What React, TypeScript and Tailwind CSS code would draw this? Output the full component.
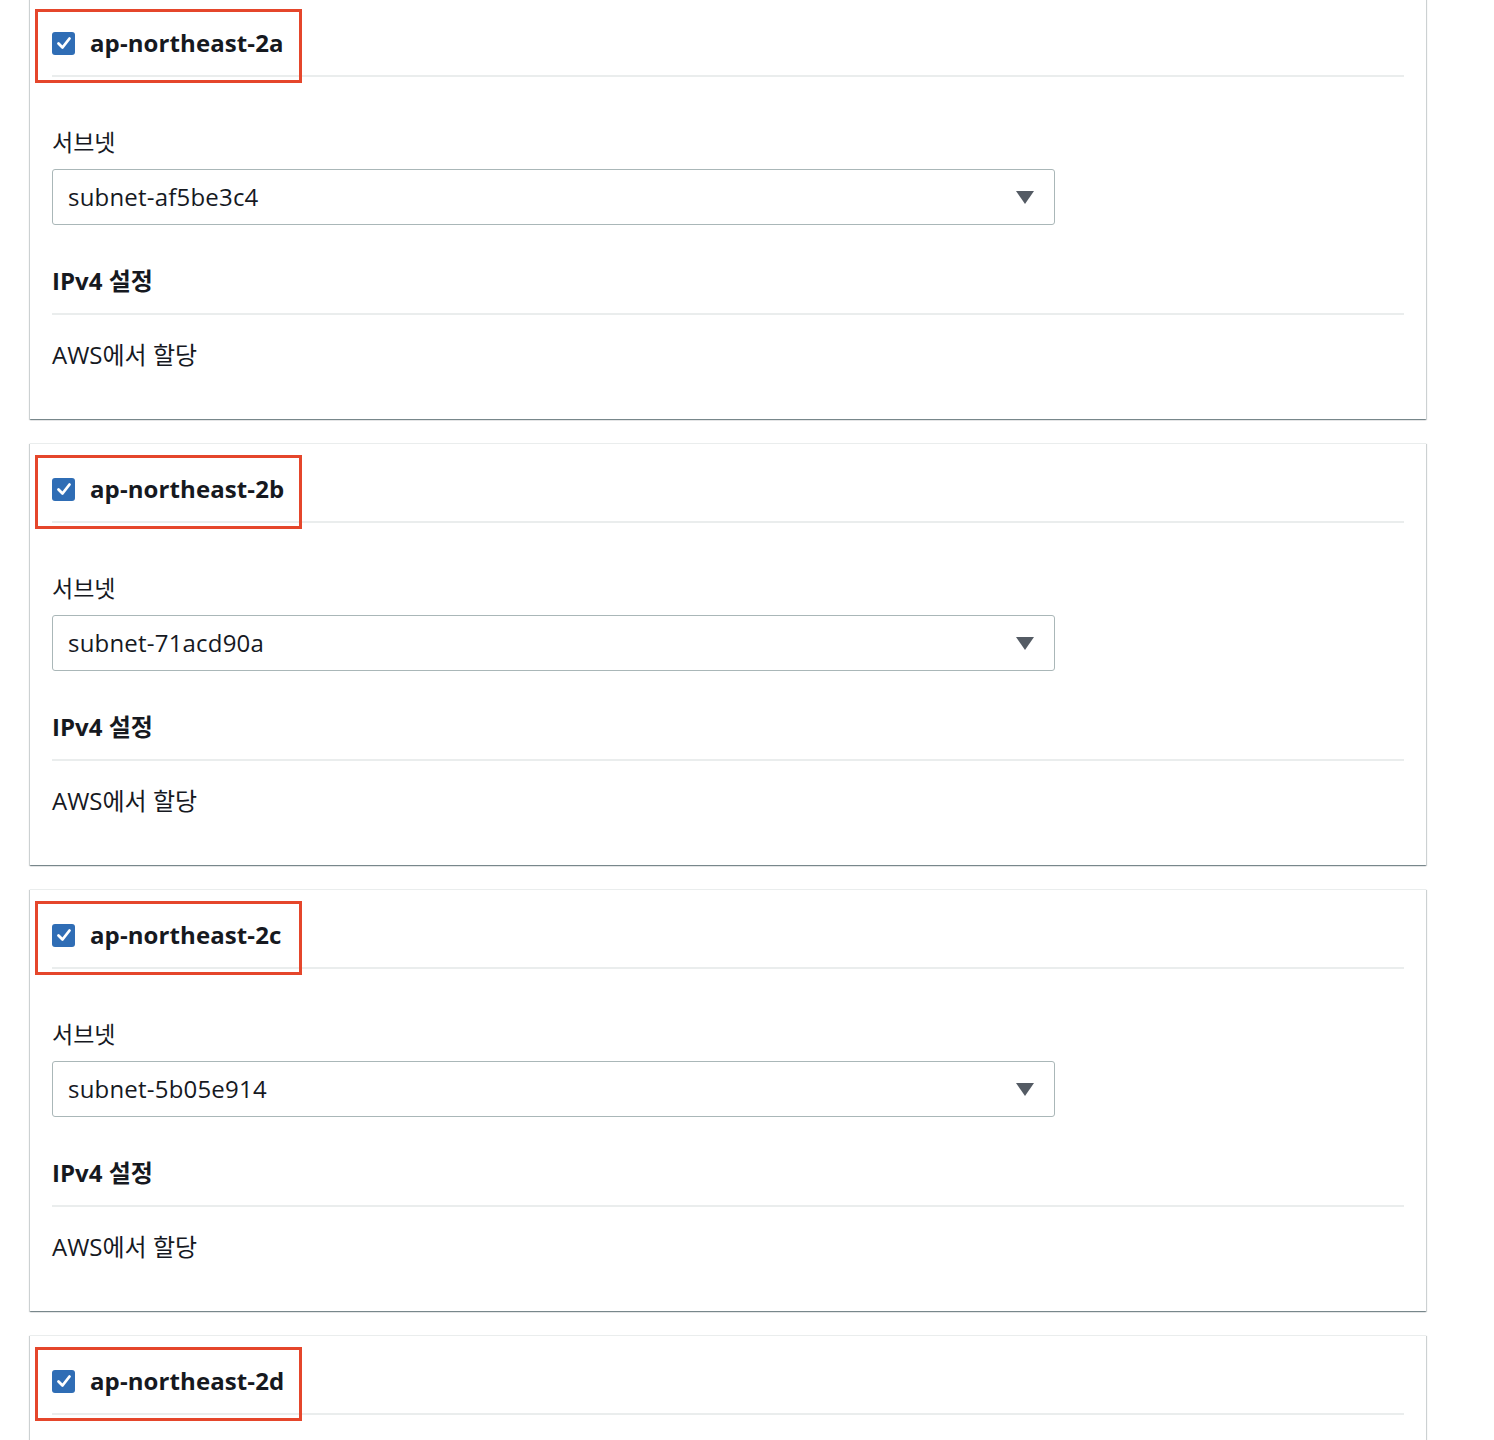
const ZONES = [
  { az: "ap-northeast-2a", subnet: "subnet-af5be3c4" },
  { az: "ap-northeast-2b", subnet: "subnet-71acd90a" },
  { az: "ap-northeast-2c", subnet: "subnet-5b05e914" },
  { az: "ap-northeast-2d", subnet: "subnet-0d3c2a91" },
];

const CheckIcon = () => (
  <span className="w-[23px] h-[23px] rounded-[3px] bg-[#2f6db5] flex items-center justify-center shrink-0">
    <svg width="16" height="16" viewBox="0 0 16 16" fill="none">
      <path d="M2.5 8.5 L6.5 12.5 L13.5 3.5" stroke="#fff" strokeWidth="2.8" strokeLinecap="round" strokeLinejoin="round" />
    </svg>
  </span>
);

const ZoneCard = ({ az, subnet }: { az: string; subnet: string }) => (
  <div className="relative bg-white border-t border-[#eaeded] px-[22px] shadow-[0_1px_1px_0_rgba(0,28,36,0.35),1px_1px_1px_0_rgba(0,28,36,0.15),-1px_1px_1px_0_rgba(0,28,36,0.15)] h-[422px]">
    {/* 헤더: 가용 영역 체크박스 */}
    <div className="pt-[28px] pb-[15px] border-b-2 border-[#eaeded]">
      <label className="flex items-center gap-[15px] h-[34px]">
        <CheckIcon />
        <span className="text-[24px] font-bold text-[#16191f] leading-none tracking-[0.1px]">{az}</span>
      </label>
    </div>
    {/* 강조 표시 (annotation) */}
    <div className="absolute left-[5px] top-[11px] w-[267px] h-[74px] border-[3px] border-[#e5462b] pointer-events-none" />

    <div className="pt-[50px]">
      <p className="text-[23px] leading-[30px] text-[#16191f]">서브넷</p>
      <div className="mt-[12px] w-[1003px] h-[56px] border border-[#aab7b8] rounded-[3px] flex items-center justify-between pl-[15px] pr-[20px]">
        <span className="text-[24px] text-[#16191f] tracking-[0.2px]">{subnet}</span>
        <svg width="18" height="13" viewBox="0 0 18 13">
          <path d="M0 0 H18 L9 13 Z" fill="#545b64" />
        </svg>
      </div>
      <p className="mt-[41px] text-[24px] leading-[30px] font-bold text-[#16191f]">IPv4 설정</p>
      <div className="mt-[17px] border-b-2 border-[#eaeded]" />
      <p className="mt-[25px] text-[24px] leading-[30px] text-[#16191f]">AWS에서 할당</p>
    </div>
  </div>
);

export default function App() {
  return (
    <div className="min-h-screen bg-white font-['Open_Sans','Noto_Sans_CJK_KR',sans-serif] overflow-hidden h-[1440px]">
      <div className="ml-[30px] w-[1396px] -mt-[3px] flex flex-col gap-[24px]">
        {ZONES.map((z) => (
          <ZoneCard key={z.az} az={z.az} subnet={z.subnet} />
        ))}
      </div>
    </div>
  );
}
